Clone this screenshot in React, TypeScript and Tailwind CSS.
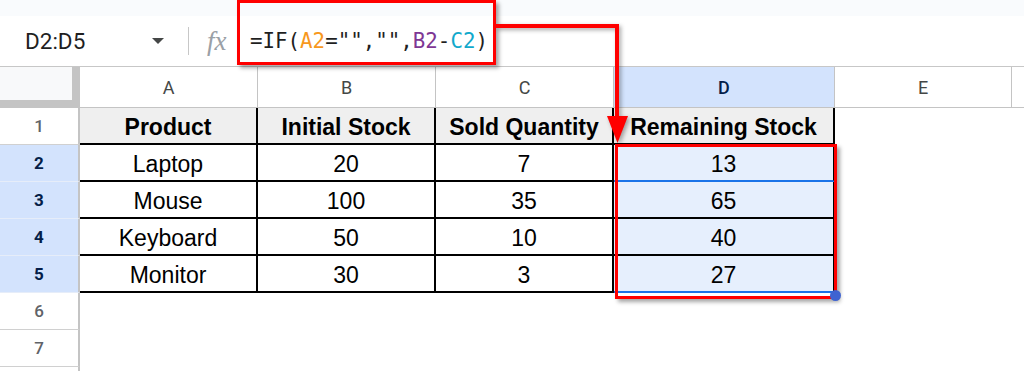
import React from "react";

const cols = ["A", "B", "C", "D", "E"];

const data = [
  ["Product", "Initial Stock", "Sold Quantity", "Remaining Stock"],
  ["Laptop", "20", "7", "13"],
  ["Mouse", "100", "35", "65"],
  ["Keyboard", "50", "10", "40"],
  ["Monitor", "30", "3", "27"],
];

export default function App() {
  return (
    <div className="relative w-[1024px] h-[371px] overflow-hidden bg-white font-['Roboto',sans-serif]">
      {/* top strip */}
      <div className="h-[16px] bg-[#f9fbfd]" />

      {/* formula bar */}
      <div className="flex items-center h-[51px] border-b border-[#c7c7c7] bg-white">
        <span className="pl-[25px] w-[150px] text-[22.5px] text-[#1f1f1f] leading-none">D2:D5</span>
        <svg width="12" height="7" viewBox="0 0 12 7" className="ml-[2px]">
          <path d="M0 0 L12 0 L6 6 Z" fill="#444746" />
        </svg>
        <div className="ml-[24px] w-px h-[28px] bg-[#c7c7c7]" />
        <span className="ml-[18px] w-[43px] text-[27px] italic text-[#9aa0a6] font-['Liberation_Serif',serif] leading-none">
          fx
        </span>
        <span className="text-[20.8px] font-['DejaVu_Sans_Mono',monospace] text-[#1f1f1f] leading-none">
          =IF(<span className="text-[#f7981d]">A2</span>=&quot;&quot;,&quot;&quot;,
          <span className="text-[#7e3794]">B2</span>-<span className="text-[#11a9cc]">C2</span>)
        </span>
      </div>

      {/* sheet grid */}
      <div className="grid grid-cols-[80px_178px_178px_178px_221px_177px_1fr] grid-rows-[41px_repeat(8,37px)] font-['Liberation_Sans',Arial,sans-serif]">
        {/* corner */}
        <div className="bg-[#c4c4c4]">
          <div className="w-[72px] h-[33px] bg-[#f8f9fa]" />
        </div>
        {cols.map((c) => (
          <div
            key={c}
            className={
              c === "D"
                ? "flex items-center justify-center border-r border-b border-[#c4c4c4] bg-[#d3e3fd] text-[18px] text-[#041e49] font-['Roboto',sans-serif] font-medium"
                : "flex items-center justify-center border-r border-b border-[#c4c4c4] bg-white text-[18px] text-[#444746] font-['Roboto',sans-serif]"
            }
          >
            {c}
          </div>
        ))}
        <div className="border-b border-[#c4c4c4]" />

        {Array.from({ length: 8 }).map((_, r) => {
          const rowNum = r + 1;
          const selected = rowNum >= 2 && rowNum <= 5;
          const row = data[r];
          return (
            <React.Fragment key={r}>
              <div
                className={
                  selected
                    ? "flex items-center justify-center pt-[2px] border-r-2 border-b border-r-[#c4c4c4] border-b-[#e6edf9] bg-[#d3e3fd] text-[17px] font-bold text-[#041e49] font-['Roboto',sans-serif]"
                    : "flex items-center justify-center pt-[2px] border-r-2 border-b border-r-[#c4c4c4] border-b-[#d0d0d0] bg-white text-[17px] font-medium text-[#5f6368] font-['Roboto',sans-serif]"
                }
              >
                {rowNum <= 7 ? rowNum : ""}
              </div>
              {[0, 1, 2, 3].map((ci) => {
                if (!row) return <div key={ci} />;
                const header = r === 0;
                const inSel = ci === 3 && !header;
                const blueBottom = inSel && (rowNum === 2 || rowNum === 5);
                return (
                  <div
                    key={ci}
                    className={[
                      "flex items-center justify-center pt-[4px] border-r-2 border-b-2 border-r-black text-[23px] text-black",
                      header ? "bg-[#efefef] font-bold" : inSel ? "bg-[#e6effd]" : "bg-white",
                      blueBottom ? "border-b-[#1a73e8]" : "border-b-black",
                    ].join(" ")}
                  >
                    {row[ci]}
                  </div>
                );
              })}
              <div />
              <div />
            </React.Fragment>
          );
        })}
      </div>

      {/* annotations */}
      <div className="absolute left-[237px] top-0 w-[259px] h-[65px] border-[3px] border-[#ff0000] shadow-[3px_3px_4px_rgba(0,0,0,0.35)]" />
      <svg
        className="absolute left-0 top-0 drop-shadow-[2px_2px_2px_rgba(0,0,0,0.35)]"
        width="700"
        height="160"
        viewBox="0 0 700 160"
      >
        <polyline points="496,26 617,26 617,122" fill="none" stroke="#ff0000" strokeWidth="4" />
        <polygon points="607,116 628,116 617.5,143" fill="#ff0000" />
      </svg>
      <div className="absolute left-[615px] top-[144px] w-[222px] h-[155px] border-[3px] border-[#ff0000] shadow-[3px_3px_4px_rgba(0,0,0,0.35)]" />
      <div className="absolute left-[830px] top-[290px] w-[11px] h-[11px] rounded-full bg-[#3f63d1]" />
    </div>
  );
}
